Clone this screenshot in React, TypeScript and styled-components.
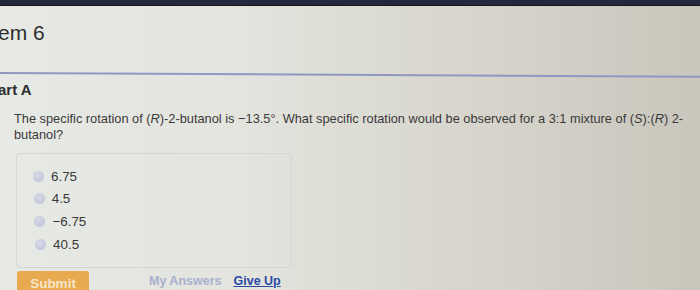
import styled, { createGlobalStyle } from "styled-components";

const Global = createGlobalStyle`
  body {
    margin: 0;
    font-family: "Liberation Sans", Arial, sans-serif;
  }
`;

const answers = ["6.75", "4.5", "\u22126.75", "40.5"];

const App = () => {
    return (
        <>
            <Global/>
            <Page>
                <TopBar/>
                <Title>em 6</Title>
                <Divider/>
                <PartTitle>art A</PartTitle>
                <Question>
                    The specific rotation of (<i>R</i>)-2-butanol is &minus;13.5&deg;. What specific rotation would be
                    observed for a 3:1 mixture of (<i>S</i>):(<i>R</i>) 2-butanol?
                </Question>
                <AnswerBox>
                    {answers.map((a, i) => (
                        <Option key={a} $shift={i}>
                            <Radio/>
                            <span>{a}</span>
                        </Option>
                    ))}
                </AnswerBox>
                <Actions>
                    <SubmitButton>Submit</SubmitButton>
                    <MutedLink>My Answers</MutedLink>
                    <GiveUp>Give Up</GiveUp>
                </Actions>
            </Page>
        </>
    );
}

const Page = styled.div`
  width: 700px;
  height: 290px;
  overflow: hidden;
  color: #3a3a3a;
  background: linear-gradient(90deg, #e7e9e5 0%, #e3e4de 35%, #d6d4cb 70%, #c9c6bc 100%);
`

const TopBar = styled.div`
  height: 5px;
  background: #24283f;
  border-bottom: 1px solid #15161c;
`

const Title = styled.h2`
  margin: 15px 0 0 -2px;
  font-size: 21px;
  font-weight: normal;
  line-height: 24px;
  color: #2e2e2e;
`

const Divider = styled.div`
  height: 2px;
  margin-top: 27px;
  background: #9098c2;
  transform: rotate(0.3deg);
  transform-origin: left;
`

const PartTitle = styled.h3`
  margin: 7px 0 0 -2px;
  font-size: 15px;
  font-weight: bold;
  line-height: 18px;
  color: #2e2e2e;
`

const Question = styled.p`
  margin: 12px 0 0 14px;
  width: 678px;
  font-size: 12.8px;
  line-height: 16px;
`

const AnswerBox = styled.div`
  margin: 10px 0 0 16px;
  width: 276px;
  height: 115px;
  box-sizing: border-box;
  border: 1px solid #d5d6d2;
  border-radius: 4px;
  padding: 15px 0 0 16px;
  display: flex;
  flex-direction: column;
  gap: 8.7px;
`

const Option = styled.label<{ $shift: number }>`
  display: flex;
  align-items: center;
  gap: 7px;
  height: 14px;
  font-size: 13.4px;
  padding-left: ${p => p.$shift * 0.7}px;
`

const Radio = styled.span`
  width: 11px;
  height: 11px;
  border-radius: 50%;
  background: radial-gradient(circle at 40% 35%, #d6d9e6, #bcc1d6);
`

const Actions = styled.div`
  display: flex;
  align-items: flex-start;
  margin: 3px 0 0 17px;
`

const SubmitButton = styled.button`
  width: 72px;
  height: 22px;
  border: none;
  border-radius: 3px 3px 0 0;
  background: #e9a94e;
  color: #f7e6cc;
  font-family: inherit;
  font-size: 13.5px;
  font-weight: bold;
  padding: 2px 0 0;
  margin-right: 60px;
`

const MutedLink = styled.span`
  font-size: 12.5px;
  font-weight: bold;
  color: #a9b0cf;
  margin: 3px 12px 0 0;
  line-height: 15px;
`

const GiveUp = styled.a`
  font-size: 12.5px;
  font-weight: bold;
  color: #2c4aa5;
  text-decoration: underline;
  line-height: 15px;
  margin-top: 3px;
`

export default App
